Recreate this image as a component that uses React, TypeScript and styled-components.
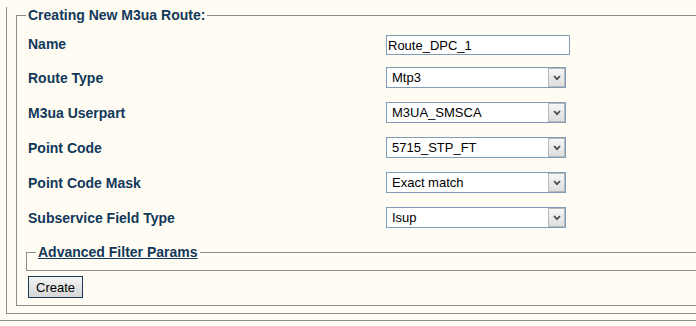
import React from "react";
import styled, { createGlobalStyle } from "styled-components";

const GlobalStyle = createGlobalStyle`
  html, body {
    margin: 0;
    padding: 0;
    background: #fffcf4;
    overflow: hidden;
  }
  body {
    font-family: "Liberation Sans", Arial, sans-serif;
    color: #12385a;
  }
`;

const Page = styled.div`
  width: 780px;
`;

const Frame = styled.div`
  margin-left: 6px;
  border-left: 1px solid #8c8c8c;
  border-bottom: 1px solid #8c8c8c;
  padding: 0 0 7px 9px;
`;

const Section = styled.fieldset`
  margin: 7px 0 0 0;
  padding: 5px 11px 7px 11px;
  border: 1px solid #8c8c8c;
`;

const Legend = styled.legend`
  margin-left: -2px;
  padding: 0 2px;
  font-size: 14px;
  line-height: 16px;
  font-weight: bold;
`;

const FieldGrid = styled.div`
  display: grid;
  grid-template-columns: 358px auto;
  align-items: center;
`;

const Label = styled.label`
  font-size: 14px;
  line-height: 16px;
  font-weight: bold;
`;

const Cell = styled.div<{ $tight?: boolean }>`
  display: flex;
  padding: 7px 0 ${(p) => (p.$tight ? "5px" : "7px")} 0;
`;

const TextInput = styled.input`
  box-sizing: border-box;
  width: 184px;
  height: 20px;
  margin: 0;
  padding: 0 1px;
  border: 1px solid #7f9db9;
  background: #fff;
  color: #000;
  font: 13px "Liberation Sans", Arial, sans-serif;
  outline: none;
`;

const SelectBox = styled.div`
  box-sizing: border-box;
  display: flex;
  width: 180px;
  height: 21px;
  border: 1px solid #7f9db9;
  background: #fff;
`;

const NativeSelect = styled.select`
  appearance: none;
  flex: 1;
  min-width: 0;
  margin: 0;
  padding: 0 0 0 5px;
  border: none;
  outline: none;
  background: transparent;
  color: #000;
  font: 13px "Liberation Sans", Arial, sans-serif;
`;

const ArrowButton = styled.span`
  box-sizing: border-box;
  flex: none;
  width: 17px;
  display: flex;
  align-items: center;
  justify-content: center;
  border: 1px solid #b8b8b8;
  background: linear-gradient(#f6f6f6, #dedede);
`;

const SubSection = styled.fieldset`
  margin: 9px 0 0 -2px;
  padding: 3px 9px 7px 11px;
  border: 1px solid #8c8c8c;
`;

const LegendLink = styled.a`
  color: #12385a;
  text-decoration: underline;
`;

const Button = styled.button`
  box-sizing: border-box;
  display: block;
  margin-top: 5px;
  height: 22px;
  padding: 0 7px;
  border: 1px solid #1c3a56;
  border-radius: 0;
  background: linear-gradient(#f4f4f4, #d6d6d6);
  color: #000;
  font: 13px "Liberation Sans", Arial, sans-serif;
`;

const BottomRule = styled.div`
  margin-top: 6px;
  border-top: 1px solid #8c8c8c;
`;

const Chevron = () => (
  <svg width="8" height="6" viewBox="0 0 8 6">
    <polyline
      points="1,1 4,4.2 7,1"
      fill="none"
      stroke="#4a4a4a"
      strokeWidth="1.8"
    />
  </svg>
);

const Select: React.FC<{ options: string[] }> = ({ options }) => (
  <SelectBox>
    <NativeSelect defaultValue={options[0]}>
      {options.map((o) => (
        <option key={o}>{o}</option>
      ))}
    </NativeSelect>
    <ArrowButton>
      <Chevron />
    </ArrowButton>
  </SelectBox>
);

const selects: { label: string; options: string[] }[] = [
  { label: "Route Type", options: ["Mtp3", "Sccp"] },
  { label: "M3ua Userpart", options: ["M3UA_SMSCA"] },
  { label: "Point Code", options: ["5715_STP_FT"] },
  { label: "Point Code Mask", options: ["Exact match"] },
  { label: "Subservice Field Type", options: ["Isup", "Sccp", "Tup"] },
];

export default function App() {
  return (
    <Page>
      <GlobalStyle />
      <Frame>
        <Section>
          <Legend>Creating New M3ua Route:</Legend>
          <FieldGrid>
            <Label>Name</Label>
            <Cell $tight>
              <TextInput defaultValue="Route_DPC_1" />
            </Cell>
            {selects.map((s) => (
              <React.Fragment key={s.label}>
                <Label>{s.label}</Label>
                <Cell>
                  <Select options={s.options} />
                </Cell>
              </React.Fragment>
            ))}
          </FieldGrid>
          <SubSection>
            <Legend>
              <LegendLink href="#">Advanced Filter Params</LegendLink>
            </Legend>
          </SubSection>
          <Button>Create</Button>
        </Section>
      </Frame>
      <BottomRule />
    </Page>
  );
}
